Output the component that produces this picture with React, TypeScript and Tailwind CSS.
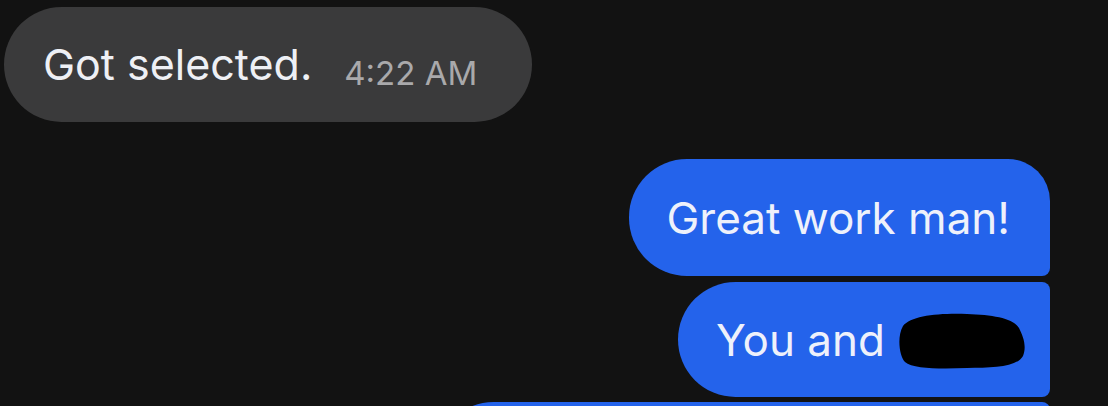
function Redacted() {
  return (
    <svg width="130" height="58" viewBox="0 0 130 58" className="shrink-0 -mr-[18px]">
      <path
        d="M6 14 C14 4 40 1 70 2 C96 3 116 6 122 16 C126 24 130 34 126 44 C120 55 96 56 70 56 C44 57 16 57 8 50 C2 44 0 24 6 14 Z"
        fill="#000"
      />
    </svg>
  );
}

export default function App() {
  return (
    <div
      className="w-[1108px] h-[406px] overflow-hidden bg-[#121212] flex flex-col pt-[7px] pl-[4px] pr-[58px]"
      style={{ fontFamily: 'Inter, "Noto Sans", sans-serif' }}
    >
      <div className="self-start h-[115px] shrink-0 flex items-center rounded-[58px] bg-[#3a3a3b] pl-[39px] pr-[55px]">
        <span className="text-[43px] leading-none text-[#eef0f5]">Got selected.</span>
        <span className="ml-[32px] mt-[18px] text-[33px] leading-none text-[#a9a9ab]">4:22 AM</span>
      </div>

      <div className="self-end mt-[37px] h-[117px] shrink-0 flex items-center rounded-l-[58px] rounded-tr-[42px] rounded-br-[8px] bg-[#2463eb] pl-[38px] pr-[40px]">
        <span className="text-[44px] leading-none text-[#eef1fb]">Great work man!</span>
      </div>

      <div className="self-end mt-[6px] h-[115px] shrink-0 flex items-center rounded-l-[58px] rounded-r-[8px] bg-[#2463eb] pl-[38px] pr-[41px]">
        <span className="text-[44px] leading-none text-[#eef1fb]">You and</span>
        <span className="ml-[12px] mt-[2px] flex">
          <Redacted />
        </span>
      </div>

      <div className="self-end mt-[5px] w-[614px] h-[115px] shrink-0 rounded-l-[58px] rounded-tr-[8px] bg-[#2463eb]" />
    </div>
  );
}
